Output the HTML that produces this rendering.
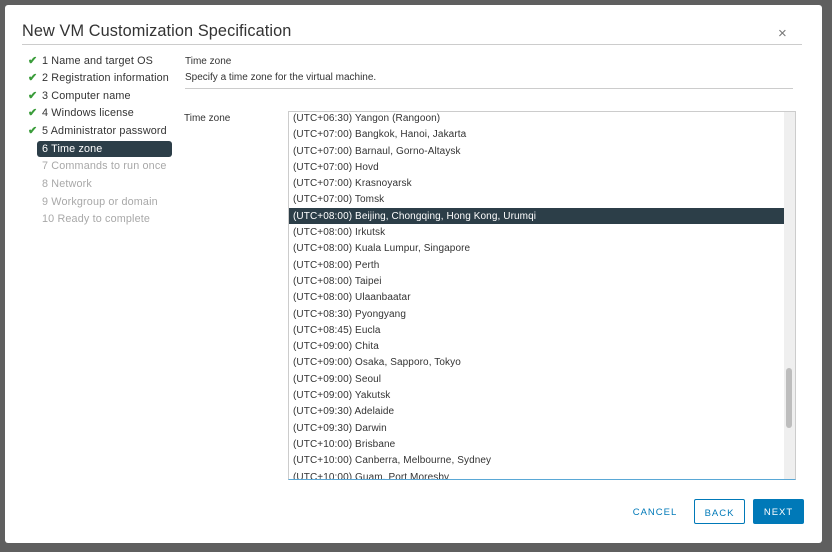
<!DOCTYPE html>
<html><head><style>
*{margin:0;padding:0;box-sizing:border-box}
body{width:832px;height:552px;background:#5f5f5f;font-family:"Liberation Sans",sans-serif;position:relative;overflow:hidden}
.modal{position:absolute;left:5px;top:5px;width:817px;height:538px;background:#fff;border-radius:3px}
.title{position:absolute;left:22px;top:22px;font-size:16.3px;color:#333;letter-spacing:0.1px}
.hr{position:absolute;left:22px;top:44px;width:780px;height:1px;background:#ccc}
.x{position:absolute;left:778px;top:25px;font-size:15px;color:#777}
.nav div{position:absolute;left:28px;font-size:10.8px;color:#333;height:16px;line-height:16px;white-space:nowrap;letter-spacing:0.15px}
.nav .ck{color:#3a9c3a;position:absolute;left:0;font-weight:bold}
.nav .t{position:absolute;left:14px}
.nav .dim .t{color:#a8a8a8}
.nav .act{left:37px;width:135px;background:#2c3e48;border-radius:3px}
.nav .act .t{color:#fff;left:5px}
.h1{position:absolute;left:185px;top:56px;font-size:10px;color:#333}
.h2{position:absolute;left:185px;top:72px;font-size:10px;color:#333}
.hr2{position:absolute;left:185px;top:88px;width:608px;height:1px;background:#ccc}
.lbl{position:absolute;left:184px;top:113px;font-size:10px;color:#333}
.list{position:absolute;left:288px;top:111px;width:508px;height:369px;border:1px solid #ccc;border-bottom:1px solid #5aa8d6;overflow:hidden}
.rows{position:absolute;left:0;top:-2px;width:496px}
.rows div{height:16.3px;line-height:17px;font-size:10px;color:#333;padding-left:4px;white-space:nowrap;letter-spacing:0.1px}
.rows .sel{background:#2c3e48;color:#fff}
.sb{position:absolute;right:0;top:0;width:11px;height:100%;background:#efefef}
.th{position:absolute;left:2px;top:256px;width:6px;height:60px;background:#bdbdbd;border-radius:3px}
.btn{position:absolute;top:499px;height:25px;font-size:9.5px;letter-spacing:1px;line-height:27px;text-align:center;border-radius:2px}
</style></head><body>
<div class="modal"></div>
<div class="title">New VM Customization Specification</div>
<div class="hr"></div>
<div class="x">×</div>
<div class="nav">
<div style="top:53px"><span class="ck">✔</span><span class="t">1 Name and target OS</span></div>
<div style="top:70px"><span class="ck">✔</span><span class="t">2 Registration information</span></div>
<div style="top:88px"><span class="ck">✔</span><span class="t">3 Computer name</span></div>
<div style="top:105px"><span class="ck">✔</span><span class="t">4 Windows license</span></div>
<div style="top:123px"><span class="ck">✔</span><span class="t">5 Administrator password</span></div>
<div class="act" style="top:141px"><span class="t">6 Time zone</span></div>
<div class="dim" style="top:158px"><span class="t">7 Commands to run once</span></div>
<div class="dim" style="top:176px"><span class="t">8 Network</span></div>
<div class="dim" style="top:194px"><span class="t">9 Workgroup or domain</span></div>
<div class="dim" style="top:211px"><span class="t">10 Ready to complete</span></div>
</div>
<div class="h1">Time zone</div>
<div class="h2">Specify a time zone for the virtual machine.</div>
<div class="hr2"></div>
<div class="lbl">Time zone</div>
<div class="list"><div class="rows">
<div>(UTC+06:30) Yangon (Rangoon)</div>
<div>(UTC+07:00) Bangkok, Hanoi, Jakarta</div>
<div>(UTC+07:00) Barnaul, Gorno-Altaysk</div>
<div>(UTC+07:00) Hovd</div>
<div>(UTC+07:00) Krasnoyarsk</div>
<div>(UTC+07:00) Tomsk</div>
<div class="sel">(UTC+08:00) Beijing, Chongqing, Hong Kong, Urumqi</div>
<div>(UTC+08:00) Irkutsk</div>
<div>(UTC+08:00) Kuala Lumpur, Singapore</div>
<div>(UTC+08:00) Perth</div>
<div>(UTC+08:00) Taipei</div>
<div>(UTC+08:00) Ulaanbaatar</div>
<div>(UTC+08:30) Pyongyang</div>
<div>(UTC+08:45) Eucla</div>
<div>(UTC+09:00) Chita</div>
<div>(UTC+09:00) Osaka, Sapporo, Tokyo</div>
<div>(UTC+09:00) Seoul</div>
<div>(UTC+09:00) Yakutsk</div>
<div>(UTC+09:30) Adelaide</div>
<div>(UTC+09:30) Darwin</div>
<div>(UTC+10:00) Brisbane</div>
<div>(UTC+10:00) Canberra, Melbourne, Sydney</div>
<div>(UTC+10:00) Guam, Port Moresby</div>
</div><div class="sb"><div class="th"></div></div></div>
<div class="btn" style="left:628px;width:54px;color:#0079b8">CANCEL</div>
<div class="btn" style="left:694px;width:51px;color:#0079b8;border:1px solid #0079b8">BACK</div>
<div class="btn" style="left:753px;width:51px;color:#fff;background:#0079b8">NEXT</div>
</body></html>
